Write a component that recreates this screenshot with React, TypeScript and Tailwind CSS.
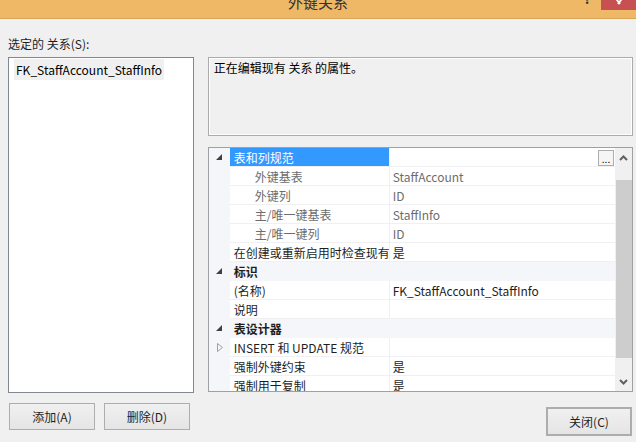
import React from 'react';

type Row = {
  kind: 'cat' | 'prop' | 'child';
  name: string;
  value?: string;
  glyph?: 'open' | 'closed';
  selected?: boolean;
  ellipsis?: boolean;
};

const rows: Row[] = [
  { kind: 'prop', name: '表和列规范', glyph: 'open', selected: true, ellipsis: true },
  { kind: 'child', name: '外键基表', value: 'StaffAccount' },
  { kind: 'child', name: '外键列', value: 'ID' },
  { kind: 'child', name: '主/唯一键基表', value: 'StaffInfo' },
  { kind: 'child', name: '主/唯一键列', value: 'ID' },
  { kind: 'prop', name: '在创建或重新启用时检查现有', value: '是' },
  { kind: 'cat', name: '标识', glyph: 'open' },
  { kind: 'prop', name: '(名称)', value: 'FK_StaffAccount_StaffInfo' },
  { kind: 'prop', name: '说明', value: '' },
  { kind: 'cat', name: '表设计器', glyph: 'open' },
  { kind: 'prop', name: 'INSERT 和 UPDATE 规范', glyph: 'closed' },
  { kind: 'prop', name: '强制外键约束', value: '是' },
  { kind: 'prop', name: '强制用于复制', value: '是' },
];

const Glyph: React.FC<{ type?: 'open' | 'closed' }> = ({ type }) => {
  if (type === 'open')
    return (
      <svg width="7" height="7" viewBox="0 0 7 7">
        <polygon points="6,0 6,6 0,6" fill="#404040" />
      </svg>
    );
  if (type === 'closed')
    return (
      <svg width="6" height="9" viewBox="0 0 6 9">
        <polygon points="0.5,0.5 5.5,4.5 0.5,8.5" fill="none" stroke="#a0a0a0" strokeWidth="1" />
      </svg>
    );
  return null;
};

const GridRow: React.FC<{ row: Row }> = ({ row }) => {
  if (row.kind === 'cat') {
    return (
      <div className="flex h-[19px] shrink-0 bg-[#f4f6f9]">
        <div className="w-[21px] flex items-center justify-center pl-[1px]">
          <Glyph type={row.glyph} />
        </div>
        <div className="flex-1 flex items-center pl-[4px] pt-[1px] font-bold text-[#1e1e1e]">{row.name}</div>
      </div>
    );
  }
  const gray = row.kind === 'child';
  return (
    <div className="flex h-[19px] shrink-0">
      <div className="w-[21px] bg-[#f4f6f9] flex items-center justify-center pl-[1px]">
        <Glyph type={row.glyph} />
      </div>
      <div
        className={`w-[160px] shrink-0 flex items-center pt-[1px] overflow-hidden whitespace-nowrap border-b border-r border-[#f0f0f4] ${
          row.selected ? 'bg-[#3399ff] text-white' : gray ? 'bg-white text-[#6d6d6d]' : 'bg-white text-[#1e1e1e]'
        } ${gray ? 'pl-[25px]' : 'pl-[4px]'}`}
      >
        {row.name}
      </div>
      <div className={`flex-1 flex items-center justify-between pl-[3px] pr-[1px] pt-[1px] bg-white border-b border-[#f0f0f4] ${gray ? 'text-[#6d6d6d]' : 'text-[#1e1e1e]'}`}>
        <span>{row.value}</span>
        {row.ellipsis && (
          <div className="w-[16px] h-[16px] border border-[#adadad] bg-[#f5f5f5] flex items-end justify-center text-[10px] leading-[12px] text-black">
            ...
          </div>
        )}
      </div>
    </div>
  );
};

const Chevron: React.FC<{ down?: boolean }> = ({ down }) => (
  <svg width="9" height="6" viewBox="0 0 9 6">
    <polyline
      points={down ? '1,1 4.5,4.5 8,1' : '1,5 4.5,1.5 8,5'}
      fill="none"
      stroke="#606060"
      strokeWidth="2"
    />
  </svg>
);

const Button: React.FC<{ label: string; className?: string }> = ({ label, className }) => (
  <div
    className={`flex items-center justify-center bg-gradient-to-b from-[#f0f0f0] to-[#e5e5e5] border border-[#adadad] text-[#1e1e1e] ${className ?? ''}`}
  >
    {label}
  </div>
);

export default function App() {
  return (
    <div className="w-[636px] h-[442px] bg-[#f0f0f0] overflow-hidden font-['Microsoft_YaHei','Noto_Sans_CJK_SC',sans-serif] text-[12px] leading-[16px] text-[#1e1e1e]">
      {/* title bar */}
      <div className="relative h-[19px] bg-[#eeb866] border-b border-[#d9a458] overflow-hidden">
        <div className="absolute left-0 right-0 top-[-8px] text-center text-[15px] leading-[20px] text-[#333]">外键关系</div>
        <div className="absolute left-[584px] top-[-9px] text-[13px] leading-[16px] font-bold text-[#333]">?</div>
        <div className="absolute left-[601px] top-0 w-[35px] h-[10px] bg-[#c75050] flex justify-center">
          <svg width="12" height="10" viewBox="0 0 12 10">
            <line x1="1" y1="-4" x2="7" y2="4" stroke="white" strokeWidth="1.8" />
            <line x1="11" y1="-4" x2="5" y2="4" stroke="white" strokeWidth="1.8" />
          </svg>
        </div>
      </div>

      <div className="pl-[8px] pr-[3px]">
        <div className="h-[16px] mt-[17px] mb-[5px]">选定的 关系(S):</div>

        <div className="flex gap-[14px] h-[336px]">
          {/* relation list */}
          <div className="w-[186px] h-[336px] border border-[#828790] bg-white pl-[5px] pt-[1px]">
            <div className="w-[150px] h-[21px] bg-[#f0f0f0] flex items-center pl-[2px] text-black">
              FK_StaffAccount_StaffInfo
            </div>
          </div>

          {/* right column */}
          <div className="w-[426px] flex flex-col">
            <div className="h-[79px] shrink-0 border border-[#ababab]">
              <div className="h-full border border-white bg-[#f0f0f0] pl-[4px] pt-[1px] text-black">
                正在编辑现有 关系 的属性。
              </div>
            </div>

            <div className="mt-[11px] h-[245px] shrink-0 border border-[#a0a0a0] bg-white flex overflow-hidden">
              <div className="flex-1 flex flex-col overflow-hidden">
                {rows.map((r, i) => (
                  <GridRow key={i} row={r} />
                ))}
              </div>
              <div className="w-[17px] bg-[#f0f0f0] flex flex-col items-center">
                <div className="h-[17px] flex items-center justify-center pt-[2px]">
                  <Chevron />
                </div>
                <div className="mt-[15px] w-[16px] h-[178px] bg-[#cdcdcd]" />
                <div className="flex-1" />
                <div className="h-[17px] flex items-center justify-center pb-[2px]">
                  <Chevron down />
                </div>
              </div>
            </div>
          </div>
        </div>

        {/* buttons */}
        <div className="flex mt-[10px]">
          <Button label="添加(A)" className="ml-[1px] w-[86px] h-[27px]" />
          <Button label="删除(D)" className="ml-[9px] w-[86px] h-[27px]" />
          <div className="flex-1" />
          <Button label="关闭(C)" className="mt-[4px] mr-[1px] w-[86px] h-[29px] border-[#3399ff] border-[2px]" />
        </div>
      </div>
    </div>
  );
}
